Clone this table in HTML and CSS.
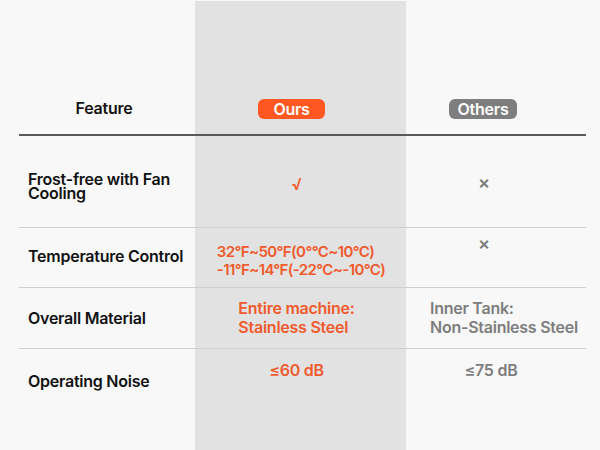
FILE: index.html
```html
<!DOCTYPE html>
<html lang="en">
<head>
<meta charset="utf-8">
<title>Comparison</title>
<link rel="stylesheet" href="styles.css">
</head>
<body>
<div class="table">
  <div class="cell head feat-head">Feature</div>
  <div class="cell head ours"><span class="badge badge-ours">Ours</span></div>
  <div class="cell head others"><span class="badge badge-others">Others</span></div>

  <div class="cell label r1 two-line">Frost-free with Fan<br>Cooling</div>
  <div class="cell ours val r1 mark">√</div>
  <div class="cell others val-o r1 mark x">×</div>

  <div class="cell label r2">Temperature Control</div>
  <div class="cell ours val r2"><span class="block temp">32°F~50°F(0°°C~10°C)<br>-11°F~14°F(-22°C~-10°C)</span></div>
  <div class="cell others val-o r2 x">×</div>

  <div class="cell label r3">Overall Material</div>
  <div class="cell ours val r3"><span class="block">Entire machine:<br>Stainless Steel</span></div>
  <div class="cell others val-o r3 left"><span class="block">Inner Tank:<br>Non-Stainless Steel</span></div>

  <div class="cell label r4 last">Operating Noise</div>
  <div class="cell ours val r4 last">≤60 dB</div>
  <div class="cell others val-o r4 last noise">≤75 dB</div>
</div>
</body>
</html>
```
FILE: styles.css
```css
html, body {
  margin: 0;
  padding: 0;
  background: #f8f8f8;
}
body {
  padding-top: 1px;
  font-family: "Inter", "Liberation Sans", sans-serif;
  font-weight: 600;
  font-size: 16px;
  letter-spacing: -0.25px;
  color: #111;
}
.table {
  display: grid;
  grid-template-columns: 176px 211px 180px;
  grid-template-rows: 135px 92px 60px 61px 101px;
  margin-left: 19px;
  width: 567px;
}
.cell {
  line-height: 19px;
  border-bottom: 1px solid #cfcfcf;
}
.ours {
  background: #e2e2e2;
}
.head {
  border-bottom: 2px solid #5a5a5a;
  padding-top: 98px;
  text-align: center;
  line-height: 20px;
}
.feat-head {
  padding-top: 97px;
  padding-right: 6px;
}
.ours.head {
  padding-right: 18px;
}
.others.head {
  padding-right: 26px;
}
.badge {
  display: inline-block;
  height: 20px;
  line-height: 20px;
  border-radius: 6px;
  color: #fff;
  text-align: center;
}
.badge-ours {
  width: 67px;
  background: #fe5722;
}
.badge-others {
  width: 68px;
  background: #7e7e7e;
}
.label {
  padding-left: 9px;
  line-height: 20px;
}
.val {
  color: #f05a2c;
  text-align: center;
  padding-right: 8px;
}
.val-o {
  color: #7d7d7d;
  text-align: center;
  padding-right: 24px;
}
.block {
  display: inline-block;
  text-align: left;
}
.temp {
  font-size: 15px;
  line-height: 18px;
  font-variant-numeric: proportional-nums;
  letter-spacing: -0.6px;
  margin-left: 9px;
}
.left {
  text-align: left;
  padding-left: 24px;
  padding-right: 0;
}
.noise {
  padding-right: 10px;
}
.x {
  font-size: 18px;
  color: #7d7d7d;
}
.mark {
  line-height: 20px;
}
.r1 { padding-top: 38px; }
.r1.two-line { padding-top: 36px; line-height: 14px; }
.r1.x { padding-top: 37px; }
.r2 { padding-top: 15px; }
.r2.label { padding-top: 18px; }
.r2.x { padding-top: 6px; line-height: 20px; }
.r3 { padding-top: 11px; }
.r3.label { padding-top: 21px; line-height: 18px; }
.r4 { padding-top: 12px; }
.r4.label { padding-top: 22px; }
.last { border-bottom: none; }
```
